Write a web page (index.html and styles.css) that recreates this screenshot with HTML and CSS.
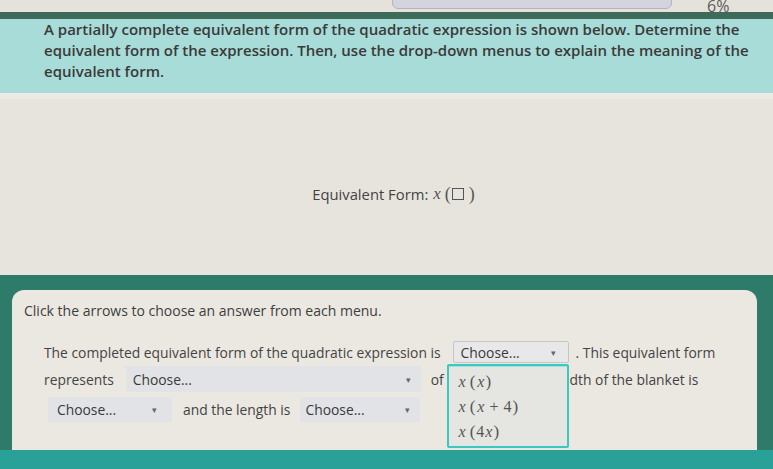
FILE: index.html
```html
<!DOCTYPE html>
<html>
<head>
<meta charset="utf-8">
<link rel="stylesheet" href="styles.css">
</head>
<body>
<div class="top">
  <div class="progress"></div>
  <div class="pct">6%</div>
</div>
<div class="stripe"></div>
<div class="prompt">A partially complete equivalent form of the quadratic expression is shown below. Determine the<br>equivalent form of the expression. Then, use the drop-down menus to explain the meaning of the<br>equivalent form.</div>
<div class="middle">
  <div class="eq">Equivalent Form: <span class="math"><i class="mv">x</i><span class="paren">(</span><span class="box"></span><span class="paren">)</span></span></div>
</div>
<div class="lower">
  <div class="card">
    <p class="instr">Click the arrows to choose an answer from each menu.</p>
    <div class="row r1">
      <span>The completed equivalent form of the quadratic expression is</span>
      <div class="sel sel-a"><span>Choose...</span><span class="caret">&#9662;</span>
        <ul class="listbox">
          <li><i class="mv">x</i><span class="mp">(</span><i class="mv">x</i><span class="mp">)</span></li>
          <li><i class="mv">x</i><span class="mp">(</span><i class="mv">x</i><span class="op">+</span>4<span class="mp">)</span></li>
          <li><i class="mv">x</i><span class="mp">(</span>4<i class="mv">x</i><span class="mp">)</span></li>
        </ul>
      </div>
      <span class="after-a">. This equivalent form</span>
    </div>
    <div class="row r2">
      <span>represents</span>
      <div class="sel sel-b"><span>Choose...</span><span class="caret">&#9662;</span></div>
      <span class="of">of</span>
      <span class="tail">the blanket. The width of the blanket is</span>
    </div>
    <div class="row r3">
      <div class="sel sel-c"><span>Choose...</span><span class="caret">&#9662;</span></div>
      <span class="len">and the length is</span>
      <div class="sel sel-d"><span>Choose...</span><span class="caret">&#9662;</span></div>
    </div>
  </div>
</div>
<div class="foot"></div>
</body>
</html>
```
FILE: styles.css
```css
* { box-sizing: border-box; }
html, body { margin: 0; padding: 0; }
body {
  width: 773px;
  height: 469px;
  overflow: hidden;
  background: #e6e3dd;
  font-family: "Open Sans", "Noto Sans", sans-serif;
  color: #3c3c3c;
}
.top {
  height: 12px;
  background: #e5e2dc;
  display: flex;
  overflow: hidden;
}
.progress {
  margin-left: 392px;
  margin-top: -3px;
  width: 280px;
  height: 12px;
  background: #d4d4e0;
  border: 1px solid #b4b4c0;
  border-radius: 0 0 6px 6px;
}
.pct {
  margin-left: 35px;
  margin-top: -2px;
  font-size: 16px;
  line-height: 16px;
  color: #5a5a5a;
}
.stripe {
  height: 7px;
  background: #3e6b59;
}
.prompt {
  height: 74px;
  background: #a8dcd8;
  padding: 0 0 0 44px;
  font-size: 15px;
  font-weight: 600;
  line-height: 21px;
  color: #3a3a3a;
  white-space: nowrap;
}
.middle {
  height: 182px;
  background: #e7e4de;
  border-top: 6px solid #eceae5;
  padding-top: 84px;
  text-align: center;
}
.eq {
  display: inline-flex;
  align-items: center;
  margin-left: 14px;
  font-size: 14.8px;
  font-weight: 500;
  line-height: 20px;
  color: #444;
}
.math {
  display: inline-flex;
  align-items: center;
  margin-left: 5px;
  font-family: "Liberation Serif", serif;
  color: #555;
}
.mv { font-family: "Liberation Serif", serif; font-style: italic; font-size: 17px; }
.paren { margin-left: 4px; font-family: "Liberation Serif", serif; font-size: 18px; }
.math .box {
  display: inline-block;
  width: 12px;
  height: 12px;
  border: 1.5px solid #555;
  margin: 0 1px;
}
.lower {
  background: #2f7b69;
  padding: 15px 16px 0 12px;
}
.card {
  height: 160px;
  background: #ebe8e1;
  border-radius: 12px 12px 0 0;
  padding: 12px 0 0 12px;
  font-size: 13.85px;
  color: #444;
}
.instr {
  margin: 0;
  font-size: 14px;
  line-height: 18px;
  color: #3e3e3e;
}
.row {
  display: flex;
  align-items: center;
  white-space: nowrap;
}
.r1 { height: 24px; margin-top: 20px; padding-left: 20px; }
.r2 { height: 26px; margin-top: 2px; padding-left: 20px; }
.r3 { height: 25px; margin-top: 5px; padding-left: 24px; }
.sel {
  position: relative;
  display: flex;
  align-items: center;
  justify-content: space-between;
  height: 100%;
  background: #e1e3e6;
  color: #3a3a3a;
}
.caret { font-size: 9px; color: #666; }
.sel-a {
  margin-left: 12px;
  width: 116px;
  height: 22px;
  background: #e8e8e8;
  border: 1px solid #c6c6c6;
  border-radius: 2px;
  padding: 0 12px 0 7px;
}
.after-a { margin-left: 7px; }
.sel-b { margin-left: 12px; width: 295px; padding: 0 10px 0 7px; }
.of { margin-left: 10px; }
.tail { margin-left: 4px; }
.sel-c { width: 124px; padding: 0 15px 0 9px; }
.len { margin-left: 11px; }
.sel-d { margin-left: 10px; width: 120px; padding: 0 10px 0 5px; }
.listbox {
  position: absolute;
  top: 22px;
  left: -7px;
  width: 122px;
  height: 84px;
  margin: 0;
  padding: 3px 0 0 10px;
  list-style: none;
  background: #e5e5e2;
  border: 2px solid #3bc8c1;
  border-radius: 2px;
  box-shadow: inset 0 1px 0 #9fe3de;
  z-index: 5;
}
.listbox li {
  height: 25px;
  display: flex;
  align-items: center;
  font-family: "Liberation Serif", serif;
  font-size: 16px;
  color: #555;
}
.listbox .mv { font-size: 16px; }
.listbox .mp { margin: 0 1px 0 4px; font-size: 17px; }
.listbox .mp + .mv, .listbox .mp:last-child { margin-left: 1px; }
.listbox .op { margin: 0 5px; }
.foot {
  height: 40px;
  background: #2aa198;
}
```
